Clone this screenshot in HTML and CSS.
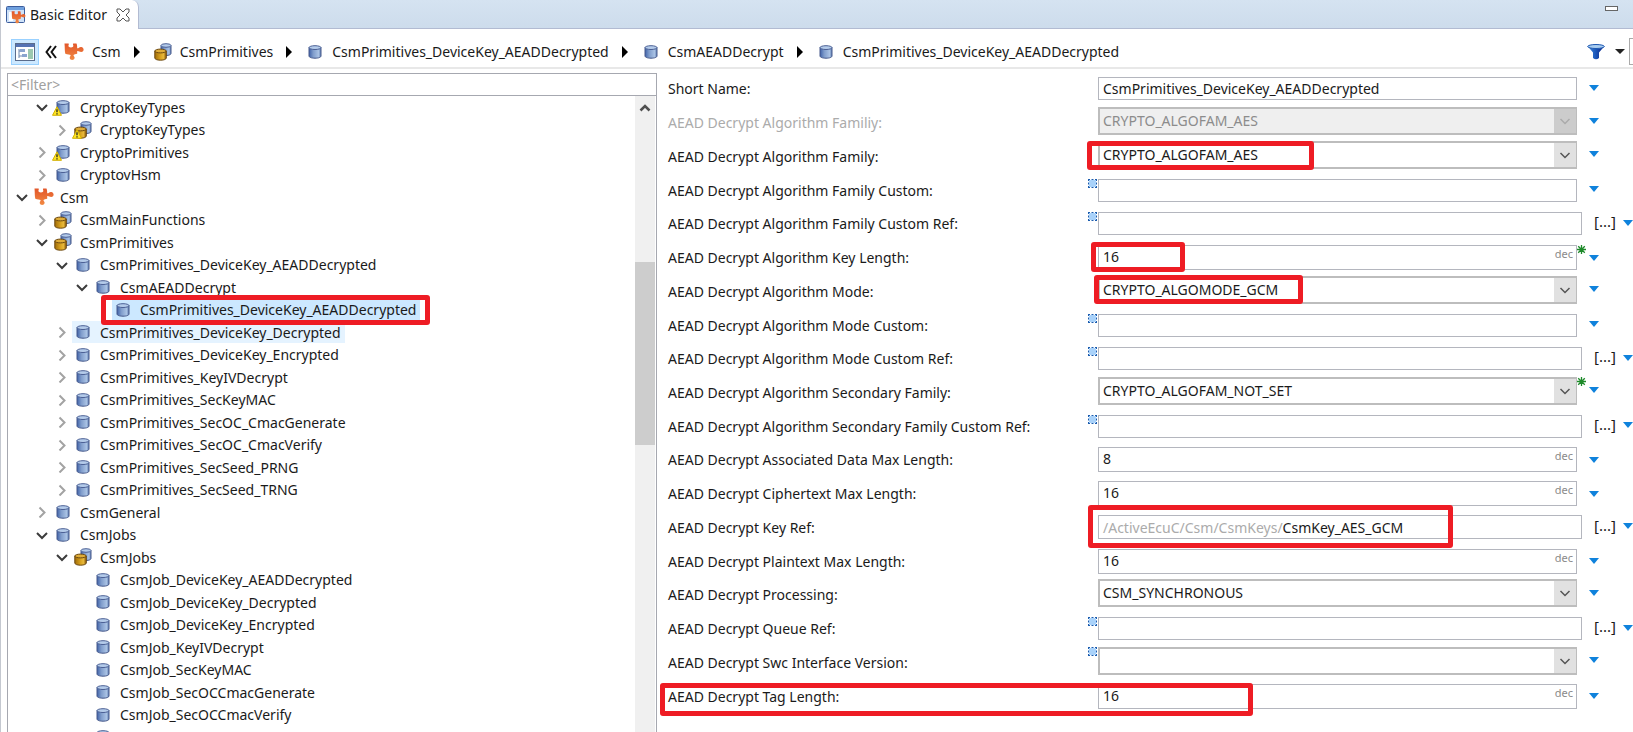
FILE: index.html
```
<!DOCTYPE html>
<html lang="en">
<head>
<meta charset="utf-8">
<title>Basic Editor</title>
<link rel="stylesheet" href="styles.css">
</head>
<body>
<svg class="defs" aria-hidden="true">
  <defs>
    <linearGradient id="blue"><stop offset="0" stop-color="#3f62a8"/><stop offset=".35" stop-color="#7f9ccb"/><stop offset=".8" stop-color="#a9c2e4"/><stop offset="1" stop-color="#5d7bb0"/></linearGradient>
    <linearGradient id="gold"><stop offset="0" stop-color="#a06c08"/><stop offset=".5" stop-color="#d9a320"/><stop offset=".75" stop-color="#e8b93c"/><stop offset="1" stop-color="#8a5a08"/></linearGradient>
    <linearGradient id="orange" x2="0" y2="1"><stop offset="0" stop-color="#e2562a"/><stop offset="1" stop-color="#f28a42"/></linearGradient>
    <linearGradient id="funnel"><stop offset="0" stop-color="#3f8be0"/><stop offset=".5" stop-color="#1a55b8"/><stop offset="1" stop-color="#0c1c80"/></linearGradient>
    <symbol id="cyl" viewBox="0 0 18 18"><path d="M3 4.500v8.500c0 1.300 2.500 2.200 6 2.200s6-.9 6-2.200v-8.500z" fill="url(#blue)" stroke="#46598a"/><ellipse cx="9" cy="4.600" rx="6" ry="1.900" fill="#b4cbea" stroke="#4a5f94"/></symbol>
    <symbol id="duo" viewBox="0 0 18 18"><path d="M7 2.500v8c0 1 2 2 5 2s5-1 5-2v-8z" fill="url(#blue)" stroke="#46598a"/><ellipse cx="12" cy="2.500" rx="5" ry="1.800" fill="#b4cbea" stroke="#4a5f94"/><path d="M.8 8v7c0 1.200 2.200 2.200 5.700 2.200s5.800-1 5.800-2.200V8z" fill="url(#gold)" stroke="#6b4810"/><ellipse cx="6.500" cy="8" rx="5.700" ry="1.900" fill="#e0ad38" stroke="#6b4810"/></symbol>
    <symbol id="warn" viewBox="0 0 10 10"><path d="M5 .8 9.500 9.300H.5z" fill="#ffe524" stroke="#d3b000" stroke-linejoin="round"/><path d="M5 3.300v3M5 7.200v1.300" stroke="#222" stroke-width="1.300"/></symbol>
    <symbol id="puzzle" viewBox="0 0 20 18"><path d="M.5.500h4c1 1-.8 2 .3 3.200 1 1 3.300 1 4.200 0C10 2.500 8.300 1.500 9.300.500h3.200c.7 1.500.7 3.300.7 4.800 1.300.4 1.800-1.500 4-1.300 3.200.3 3.200 5 0 5-2 0-2.700-1.300-4-.8v2.500c-1.500.6-3.400.5-3.700 1.400-.2 1 1.300 1.500 1.100 3-.3 2.600-4.600 2.600-4.900 0-.1-1.500 1.300-2 .8-3-.5-.8-3.200-.3-5.200-1.400C.6 8 .9 4 .5.500z" fill="url(#orange)"/></symbol>
    <symbol id="right" viewBox="0 0 12 12"><path d="M3.500 1.500 8.500 6.500 3.500 11.500" fill="none" stroke="#a3a3a3" stroke-width="2"/></symbol>
    <symbol id="down" viewBox="0 0 12 12"><path d="M1 4 6 9l5-5" fill="none" stroke="#3c3c3c" stroke-width="2"/></symbol>
  </defs>
</svg>

<div class="editor">
  <header class="tabbar">
    <div class="tab">
      <svg class="tab-icon" viewBox="0 0 20 18"><rect x=".5" y=".5" width="18" height="16" rx="1" fill="#cfe2f8" stroke="#3c5d9c"/><path d="M1 1h17v3H1z" fill="#6fa0de"/><path d="M3 6h4v9H3z" fill="#fff"/><svg x="5" y="5" width="15" height="13"><use href="#puzzle"/></svg></svg>
      <span>Basic Editor</span>
      <button class="plain" aria-label="Close tab"><svg class="close" viewBox="0 0 14 14"><path d="M1 1h3l3 3 3-3h3v3l-3 3 3 3v3h-3l-3-3-3 3H1v-3l3-3-3-3z" fill="#fff" stroke="#555"/></svg></button>
    </div>
    <button class="plain minimize" aria-label="Minimize"><svg viewBox="0 0 14 6"><rect x=".5" y=".5" width="12" height="4" fill="#fff" stroke="#666"/></svg></button>
  </header>

  <nav class="toolbar" aria-label="Breadcrumb">
    <button class="tree-toggle" aria-label="Show tree"><svg viewBox="0 0 20 18"><rect x=".5" y=".5" width="19" height="17" fill="#fff" stroke="#5a6c8c"/><path d="M1 1h18v3H1z" fill="#5673b4"/><path d="M13 6h5v10h-5z" fill="#9cc8b0"/><path d="M4 6v9M4 8h3M4 13h4" stroke="#6d87b0" fill="none"/><path d="M5 6h5v3H5zM7 11h5v3H7z" fill="#8ba5cf"/></svg></button>
    <svg class="back" viewBox="0 0 12 14"><path d="M6 1 1.500 7 6 13M11 1 6.500 7 11 13" fill="none" stroke="#111" stroke-width="2"/></svg>
    <a href="#"><svg class="puz"><use href="#puzzle"/></svg>Csm</a>
    <svg class="sep" viewBox="0 0 6 12"><path d="M0 0 6 6 0 12z"/></svg>
    <a href="#"><svg class="ico"><use href="#duo"/></svg>CsmPrimitives</a>
    <svg class="sep" viewBox="0 0 6 12"><path d="M0 0 6 6 0 12z"/></svg>
    <a href="#"><svg class="ico"><use href="#cyl"/></svg>CsmPrimitives_DeviceKey_AEADDecrypted</a>
    <svg class="sep" viewBox="0 0 6 12"><path d="M0 0 6 6 0 12z"/></svg>
    <a href="#"><svg class="ico"><use href="#cyl"/></svg>CsmAEADDecrypt</a>
    <svg class="sep" viewBox="0 0 6 12"><path d="M0 0 6 6 0 12z"/></svg>
    <a href="#"><svg class="ico"><use href="#cyl"/></svg>CsmPrimitives_DeviceKey_AEADDecrypted</a>
    <button class="plain filter-btn" aria-label="Filter"><svg class="funnel" viewBox="0 0 18 16"><path d="M.5 2 6 8.500V14q3 2.500 6 0V8.500L17.500 2z" fill="url(#funnel)"/><ellipse cx="9" cy="2.500" rx="8.300" ry="2" fill="#a9cdf0" stroke="#1c56b0"/></svg><svg class="caret" viewBox="0 0 10 6"><path d="M0 0h10L5 5z" fill="#222"/></svg></button>
    <span class="cut-box"></span>
  </nav>

  <main class="content">
    <section class="tree-panel">
      <input class="filter" type="text" placeholder="&lt;Filter&gt;" aria-label="Filter">
      <div class="tree-body">
        <ul class="tree" id="tree"></ul>
        <div class="scrollbar"><svg viewBox="0 0 12 12"><path d="M1.500 8.500 6 4l4.500 4.500" fill="none" stroke="#505050" stroke-width="2.500"/></svg><div class="thumb"></div></div>
      </div>
    </section>
    <form class="form" id="form"></form>
  </main>
</div>
<script src="script.js"></script>
</body>
</html>
```
FILE: styles.css
```
* { box-sizing: border-box; }

body {
  margin: 0;
  font-family: "Noto Sans", "Open Sans", sans-serif;
  font-size: 14px;
  color: #1a1a1a;
  background: #fff;
}

.defs { position: absolute; width: 0; height: 0; }

button, input, select { font: inherit; color: inherit; }

.plain {
  display: flex;
  align-items: center;
  padding: 0;
  border: 0;
  background: none;
}

.editor {
  display: flex;
  flex-direction: column;
  height: 100vh;
  overflow: hidden;
  border-left: 1px solid #c4c8d0;
}

/* Tab bar */
.tabbar {
  display: flex;
  justify-content: space-between;
  height: 29px;
  flex: none;
  background: linear-gradient(#d5e3f1, #cddcec);
  border-bottom: 1px solid #b2bbd2;
}

.tab {
  display: flex;
  align-items: center;
  gap: 4px;
  height: 29px;
  padding: 0 8px 0 5px;
  background: #fff;
  border-right: 1px solid #b2bbd2;
  border-radius: 0 7px 0 0;
}

.tab-icon { width: 20px; height: 18px; }
.close { width: 14px; height: 14px; margin-left: 5px; }
.minimize { align-self: flex-start; padding: 6px 14px 0 0; }
.minimize svg { width: 14px; height: 6px; }

/* Breadcrumb */
.toolbar {
  display: flex;
  align-items: center;
  height: 40px;
  flex: none;
  padding: 7px 0 0 10px;
  border-bottom: 2px solid #e8e8e8;
  white-space: nowrap;
}

.toolbar a {
  display: flex;
  align-items: center;
  gap: 8px;
  color: inherit;
  text-decoration: none;
}

.tree-toggle {
  display: flex;
  padding: 3px;
  background: #cce8ff;
  border: 1px solid #99d1ff;
}

.tree-toggle svg { width: 20px; height: 18px; }
.back { width: 12px; height: 14px; margin: 0 7px 0 6px; }
.sep { width: 6px; height: 12px; margin: 0 14px 0 13px; }
.ico { width: 18px; height: 18px; flex: none; }
.puz { width: 20px; height: 18px; flex: none; }
.filter-btn { margin-left: auto; gap: 10px; }
.funnel { width: 18px; height: 16px; }
.caret { width: 10px; height: 6px; }
.cut-box { width: 4px; height: 27px; margin-left: 4px; border: 1px solid #aaa; border-right: 0; }

.content {
  display: flex;
  flex: 1;
  min-height: 0;
}

/* Tree */
.tree-panel {
  display: flex;
  flex-direction: column;
  width: 650px;
  flex: none;
  margin: 4px 0 0 6px;
  border: 1px solid #a6a8b0;
  border-bottom: 0;
}

.filter {
  height: 22px;
  flex: none;
  padding: 0 3px;
  border: 0;
  border-bottom: 1px solid #a6a8b0;
  outline: 0;
}

.filter::placeholder { color: #a0a0a0; }

.tree-body {
  display: flex;
  flex: 1;
  min-height: 0;
}

.tree {
  flex: 1;
  margin: 0;
  padding: 0;
  list-style: none;
  overflow: hidden;
}

.tree li {
  display: flex;
  align-items: center;
  height: 22px;
  padding-left: calc(var(--level) * 20px + 8px);
  white-space: nowrap;
}

.tree li:nth-child(even) { height: 23px; }
.twisty { width: 12px; height: 12px; flex: none; margin-right: 4px; }

.node {
  position: relative;
  display: flex;
  align-items: center;
  gap: 7px;
  height: 22px;
  padding: 0 4px 0 2px;
}

.node .ico { margin-right: 1px; }
.node .puz { margin-right: -1px; }
.node.selected { background: #cce8ff; }
.node.hover { background: #e5f3ff; }
.warn { position: absolute; left: 0; bottom: 2px; width: 10px; height: 10px; }

.scrollbar {
  width: 20px;
  margin-right: 1px;
  background: #f0f0f0;
}

.scrollbar svg { display: block; width: 12px; height: 12px; margin: 6px auto; }
.thumb { height: 183px; margin-top: 148px; background: #cdcdcd; }

/* Form */
.form {
  display: grid;
  grid-template-rows: repeat(19, 1fr);
  flex: 1;
  min-width: 0;
  padding: 3px 0 19px 11px;
}

.row {
  position: relative;
  display: flex;
  align-items: center;
  min-height: 0;
}

.row > label { width: 430px; flex: none; }
.row.disabled > label { color: #ababab; }

.field {
  position: relative;
  flex: 1;
  margin-right: 56px;
}

.ref .field { margin-right: 51px; }

.field input, .field select {
  display: block;
  width: 100%;
  height: 23px;
  padding: 0 4px;
  border: 1px solid #b4b6be;
  border-radius: 0;
  background: #fff;
  outline: 0;
}

.dec .field input { height: 25px; padding: 0 32px 2px 4px; }

.combo .field { margin-bottom: 3px; }

.field select {
  height: 28px;
  padding: 0 26px 1px 3px;
  border: 2px solid #bdbdbd;
  appearance: none;
}

.field select:disabled { background: #efefef; color: #8c8c8c; opacity: 1; }

.drop {
  position: absolute;
  top: 2px;
  right: 1px;
  bottom: 2px;
  width: 22px;
  padding: 6px 5px;
  background: #e1e1e1;
  color: #555;
  pointer-events: none;
}

.drop svg { display: block; width: 12px; height: 12px; }
.disabled .drop { background: #cccccc; color: #aaa; }

.path {
  display: flex;
  align-items: center;
  height: 24px;
  padding: 0 4px;
  border: 1px solid #b4b6be;
  outline: 0;
}

.path span { color: #ababab; }

.unit {
  position: absolute;
  top: 1px;
  right: 4px;
  font-size: 11px;
  line-height: 16px;
  color: #8a8a8a;
}

.optional { position: absolute; left: -10px; top: 0; width: 9px; height: 9px; }
.star { position: absolute; right: -9px; top: 0; width: 9px; height: 9px; }

.menu { position: absolute; top: 0; bottom: 2px; right: 34px; }
.menu svg { width: 10px; height: 6px; }
.combo .menu { bottom: 4px; }
.dec .menu { bottom: 0; }
.ref .menu { right: 0; }
.browse { position: absolute; top: 0; bottom: 5px; right: 17px; font-size: 15px; }

/* Annotation frames */
.mark {
  position: absolute;
  z-index: 1;
  border: 5px solid #ee1c24;
  border-radius: 3px;
  pointer-events: none;
}

.mark-node { left: -11px; right: -10px; top: -4px; bottom: -4px; }
.mark-family { left: -11px; width: 227px; top: 0; bottom: -1px; }
.mark-key { left: -7px; width: 94px; top: -3px; bottom: -2px; }
.mark-mode { left: -4px; width: 209px; top: -1px; bottom: 0; }
.mark-ref { left: -10px; width: 365px; top: -10px; bottom: -9px; }
.mark-tag { left: -8px; width: 593px; top: 4px; height: 33px; }
```
FILE: script.js
```
const tree = [
  [1, "down", "cylw", "CryptoKeyTypes"],
  [2, "right", "duow", "CryptoKeyTypes"],
  [1, "right", "cylw", "CryptoPrimitives"],
  [1, "right", "cyl", "CryptovHsm"],
  [0, "down", "puzzle", "Csm"],
  [1, "right", "duo", "CsmMainFunctions"],
  [1, "down", "duo", "CsmPrimitives"],
  [2, "down", "cyl", "CsmPrimitives_DeviceKey_AEADDecrypted"],
  [3, "down", "cyl", "CsmAEADDecrypt"],
  [4, "", "cyl", "CsmPrimitives_DeviceKey_AEADDecrypted", "selected"],
  [2, "right", "cyl", "CsmPrimitives_DeviceKey_Decrypted", "hover"],
  [2, "right", "cyl", "CsmPrimitives_DeviceKey_Encrypted"],
  [2, "right", "cyl", "CsmPrimitives_KeyIVDecrypt"],
  [2, "right", "cyl", "CsmPrimitives_SecKeyMAC"],
  [2, "right", "cyl", "CsmPrimitives_SecOC_CmacGenerate"],
  [2, "right", "cyl", "CsmPrimitives_SecOC_CmacVerify"],
  [2, "right", "cyl", "CsmPrimitives_SecSeed_PRNG"],
  [2, "right", "cyl", "CsmPrimitives_SecSeed_TRNG"],
  [1, "right", "cyl", "CsmGeneral"],
  [1, "down", "cyl", "CsmJobs"],
  [2, "down", "duo", "CsmJobs"],
  [3, "", "cyl", "CsmJob_DeviceKey_AEADDecrypted"],
  [3, "", "cyl", "CsmJob_DeviceKey_Decrypted"],
  [3, "", "cyl", "CsmJob_DeviceKey_Encrypted"],
  [3, "", "cyl", "CsmJob_KeyIVDecrypt"],
  [3, "", "cyl", "CsmJob_SecKeyMAC"],
  [3, "", "cyl", "CsmJob_SecOCCmacGenerate"],
  [3, "", "cyl", "CsmJob_SecOCCmacVerify"],
  [3, "", "cyl", "CsmJob_SecSeed_PRNG"]
];

document.getElementById("tree").innerHTML = tree.map(([level, arrow, icon, text, state = ""]) => {
  const warn = icon.endsWith("w");
  const id = warn ? icon.slice(0, -1) : icon;
  return `<li style="--level:${level}">
    <svg class="twisty">${arrow ? `<use href="#${arrow}"/>` : ""}</svg>
    <span class="node ${state}"><svg class="${id === "puzzle" ? "puz" : "ico"}"><use href="#${id}"/></svg>${warn ? '<svg class="warn"><use href="#warn"/></svg>' : ""}<span>${text}</span>${state === "selected" ? '<i class="mark mark-node"></i>' : ""}</span></li>`;
}).join("");

const A = "AEAD Decrypt ";
const rows = [
  ["text", "Short Name:", "CsmPrimitives_DeviceKey_AEADDecrypted"],
  ["combo", A + "Algorithm Familiy:", "CRYPTO_ALGOFAM_AES", "disabled"],
  ["combo", A + "Algorithm Family:", "CRYPTO_ALGOFAM_AES", "", "family"],
  ["text", A + "Algorithm Family Custom:", "", "opt"],
  ["ref", A + "Algorithm Family Custom Ref:", "", "opt"],
  ["dec", A + "Algorithm Key Length:", "16", "changed", "key"],
  ["combo", A + "Algorithm Mode:", "CRYPTO_ALGOMODE_GCM", "", "mode"],
  ["text", A + "Algorithm Mode Custom:", "", "opt"],
  ["ref", A + "Algorithm Mode Custom Ref:", "", "opt"],
  ["combo", A + "Algorithm Secondary Family:", "CRYPTO_ALGOFAM_NOT_SET", "changed"],
  ["ref", A + "Algorithm Secondary Family Custom Ref:", "", "opt"],
  ["dec", A + "Associated Data Max Length:", "8"],
  ["dec", A + "Ciphertext Max Length:", "16"],
  ["ref", A + "Key Ref:", "/ActiveEcuC/Csm/CsmKeys/|CsmKey_AES_GCM", "", "ref"],
  ["dec", A + "Plaintext Max Length:", "16"],
  ["combo", A + "Processing:", "CSM_SYNCHRONOUS"],
  ["ref", A + "Queue Ref:", "", "opt"],
  ["combo", A + "Swc Interface Version:", "", "opt"],
  ["dec", A + "Tag Length:", "16", "", "tag"]
];

const optional = '<svg class="optional" viewBox="0 0 9 9"><rect x="1" y="1" width="7" height="7" fill="#a9d2fa"/><path d="M0 .5h9M0 8.500h9M.5 0v9M8.500 0v9" stroke="#1c5cae" stroke-dasharray="2 1.500"/></svg>';
const star = '<svg class="star" viewBox="0 0 9 9"><path d="M4.500 0v9M0 4.500h9M1.200 1.200l6.600 6.600M7.800 1.200 1.200 7.800" stroke="#1e8a2a" stroke-width="1.300"/></svg>';
const caret = '<svg viewBox="0 0 10 6"><path d="M0 0h10L5 6z" fill="#0f82dc"/></svg>';

document.getElementById("form").innerHTML = rows.map(([type, label, value, flag = "", mark = ""], i) => {
  let control;
  if (type === "combo") {
    control = `<select id="f${i}" ${flag === "disabled" ? "disabled" : ""}><option>${value}</option></select><span class="drop"><svg viewBox="0 0 12 12"><path d="M1.500 4 6 8.500 10.500 4" fill="none" stroke="currentColor" stroke-width="1.500"/></svg></span>`;
  } else if (value.includes("|")) {
    const [path, name] = value.split("|");
    control = `<div class="path" id="f${i}" role="textbox" contenteditable="true" aria-label="${label}"><span>${path}</span>${name}</div>`;
  } else {
    control = `<input type="text" id="f${i}" value="${value}">`;
  }
  const frame = mark ? `<i class="mark mark-${mark}"></i>` : "";
  return `<div class="row ${type} ${flag}">
    <label for="f${i}">${label}</label>
    <div class="field">${control}${type === "dec" ? '<span class="unit">dec</span>' : ""}${flag === "opt" ? optional : ""}${flag === "changed" ? star : ""}${mark === "tag" ? "" : frame}</div>
    ${type === "ref" ? '<button type="button" class="plain browse">[...]</button>' : ""}
    <button type="button" class="plain menu" aria-label="Menu for ${label}">${caret}</button>${mark === "tag" ? frame : ""}
  </div>`;
}).join("");
```
